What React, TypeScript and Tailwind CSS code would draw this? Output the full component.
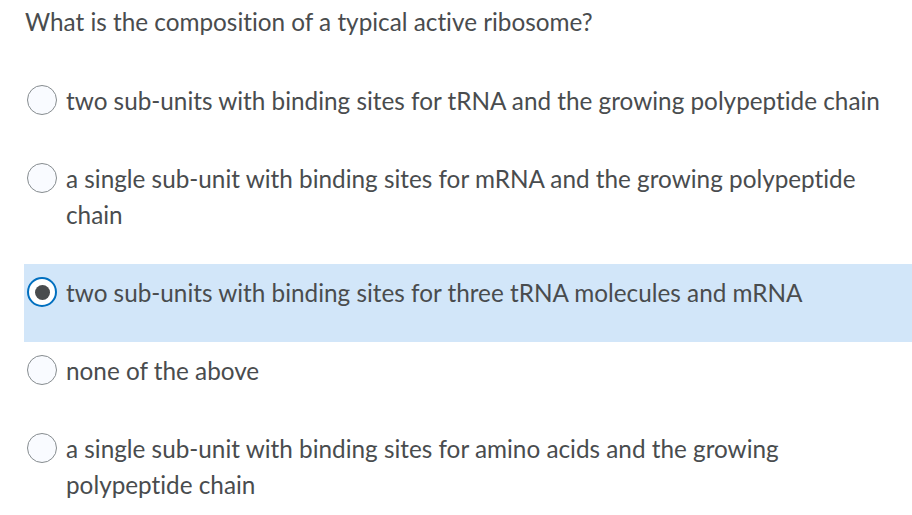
import React from "react";

const options = [
  { text: "two sub-units with binding sites for tRNA and the growing polypeptide chain" },
  { text: "a single sub-unit with binding sites for mRNA and the growing polypeptide chain" },
  { text: "two sub-units with binding sites for three tRNA molecules and mRNA", selected: true },
  { text: "none of the above" },
  { text: "a single sub-unit with binding sites for amino acids and the growing polypeptide chain" },
];

function Radio({ checked }: { checked?: boolean }) {
  if (checked) {
    return (
      <span className="mt-[2px] flex h-[30px] w-[30px] shrink-0 items-center justify-center rounded-full border-2 border-[#006fbf] bg-white">
        <span className="h-[15px] w-[15px] rounded-full bg-[#494c4e]" />
      </span>
    );
  }
  return <span className="mt-[2px] h-[30px] w-[30px] shrink-0 rounded-full border border-[#868c8f] bg-[#f9fbff]" />;
}

export default function App() {
  return (
    <div
      className="h-[515px] w-[912px] overflow-hidden bg-white text-[24.3px] leading-[36px] text-[#494c4e] [font-variant-ligatures:none]"
      style={{ fontFamily: "Lato, 'Open Sans', sans-serif" }}
    >
      <div className="pl-[25px] pt-[4px]">What is the composition of a typical active ribosome?</div>

      <div className="ml-[24px] mt-[32px]">
        {options.map((o, i) => (
          <div
            key={i}
            className={`flex items-start gap-[9px] pb-[31px] pl-[3px] pt-[11px] ${o.selected ? "bg-[#d2e6f9]" : ""}`}
          >
            <Radio checked={o.selected} />
            <span className="max-w-[820px]">{o.text}</span>
          </div>
        ))}
      </div>
    </div>
  );
}
